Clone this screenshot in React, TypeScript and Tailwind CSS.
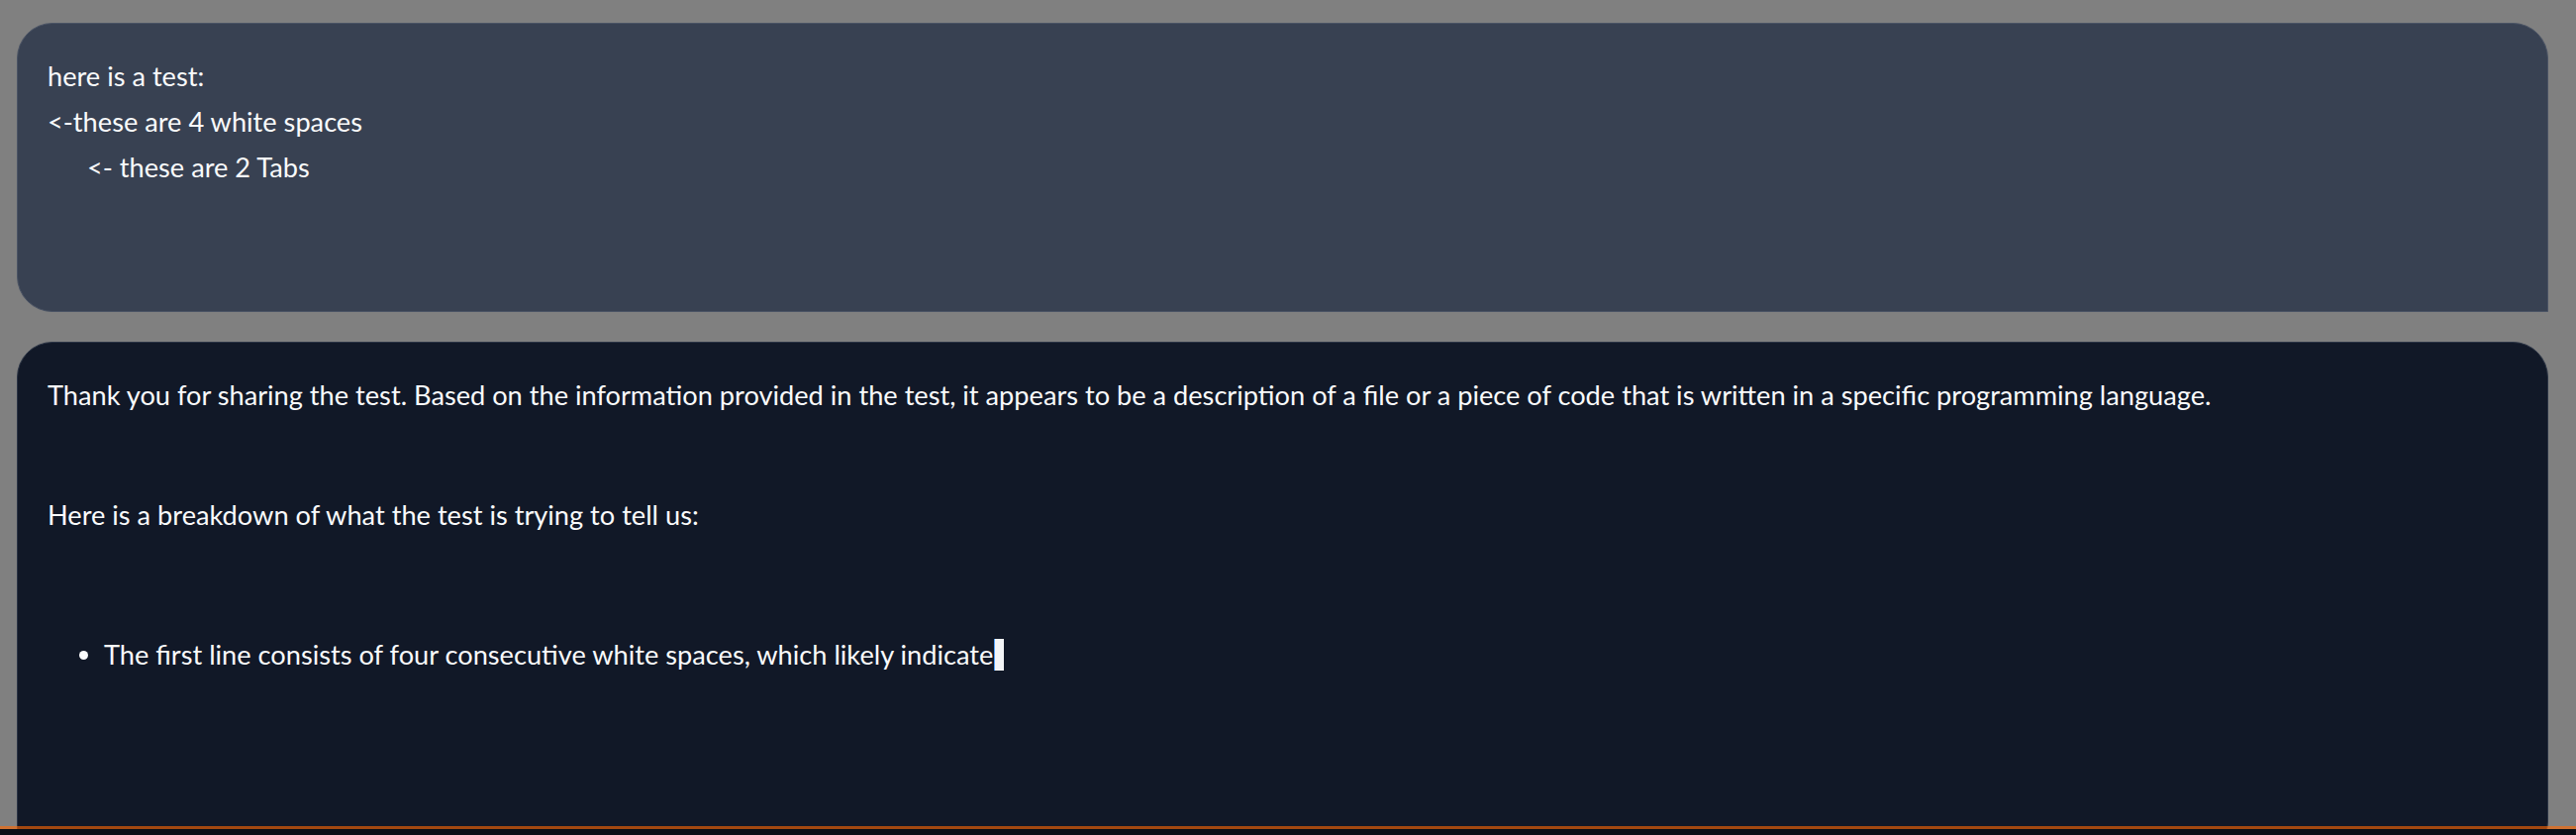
import React from "react";

const App: React.FC = () => {
  return (
    <div className="flex h-[843px] w-full flex-col overflow-hidden bg-[#808080] font-['Lato','Liberation_Sans',sans-serif] text-[27.2px] leading-[46px] text-gray-50">
      {/* chat area */}
      <div className="flex flex-1 flex-col gap-[30px] overflow-hidden pl-[17px] pr-[28px] pt-[23px]">
        {/* user message */}
        <div className="h-[292px] shrink-0 rounded-[36px] rounded-br-none border border-[#4a5364] bg-[#384152] px-[30px] py-[30px]">
          <div>here is a test:</div>
          <div>{"<-these are 4 white spaces"}</div>
          <div className="pl-[40px]">{"<- these are 2 Tabs"}</div>
        </div>

        {/* assistant message */}
        <div className="h-[520px] shrink-0 rounded-[36px] rounded-bl-none border border-[#2a3344] bg-[#111827] px-[30px] py-[30px]">
          <p>
            Thank you for sharing the test. Based on the information provided in the test, it appears to be a
            description of a file or a piece of code that is written in a specific programming language.
          </p>
          <p className="mt-[75px]">Here is a breakdown of what the test is trying to tell us:</p>
          <ul className="mt-[95px] list-disc pl-[57px]">
            <li>
              The first line consists of four consecutive white spaces, which likely indicate
              <span className="ml-[1px] inline-block h-[32px] w-[10px] translate-y-[6px] border-l border-blue-400 bg-gray-100" />
            </li>
          </ul>
        </div>
      </div>

      {/* input bar edge */}
      <div className="relative -mt-[3px] h-[9px] shrink-0 border-t-[3px] border-orange-500/60 bg-[#0a0e16] bg-clip-padding" />
    </div>
  );
};

export default App;
